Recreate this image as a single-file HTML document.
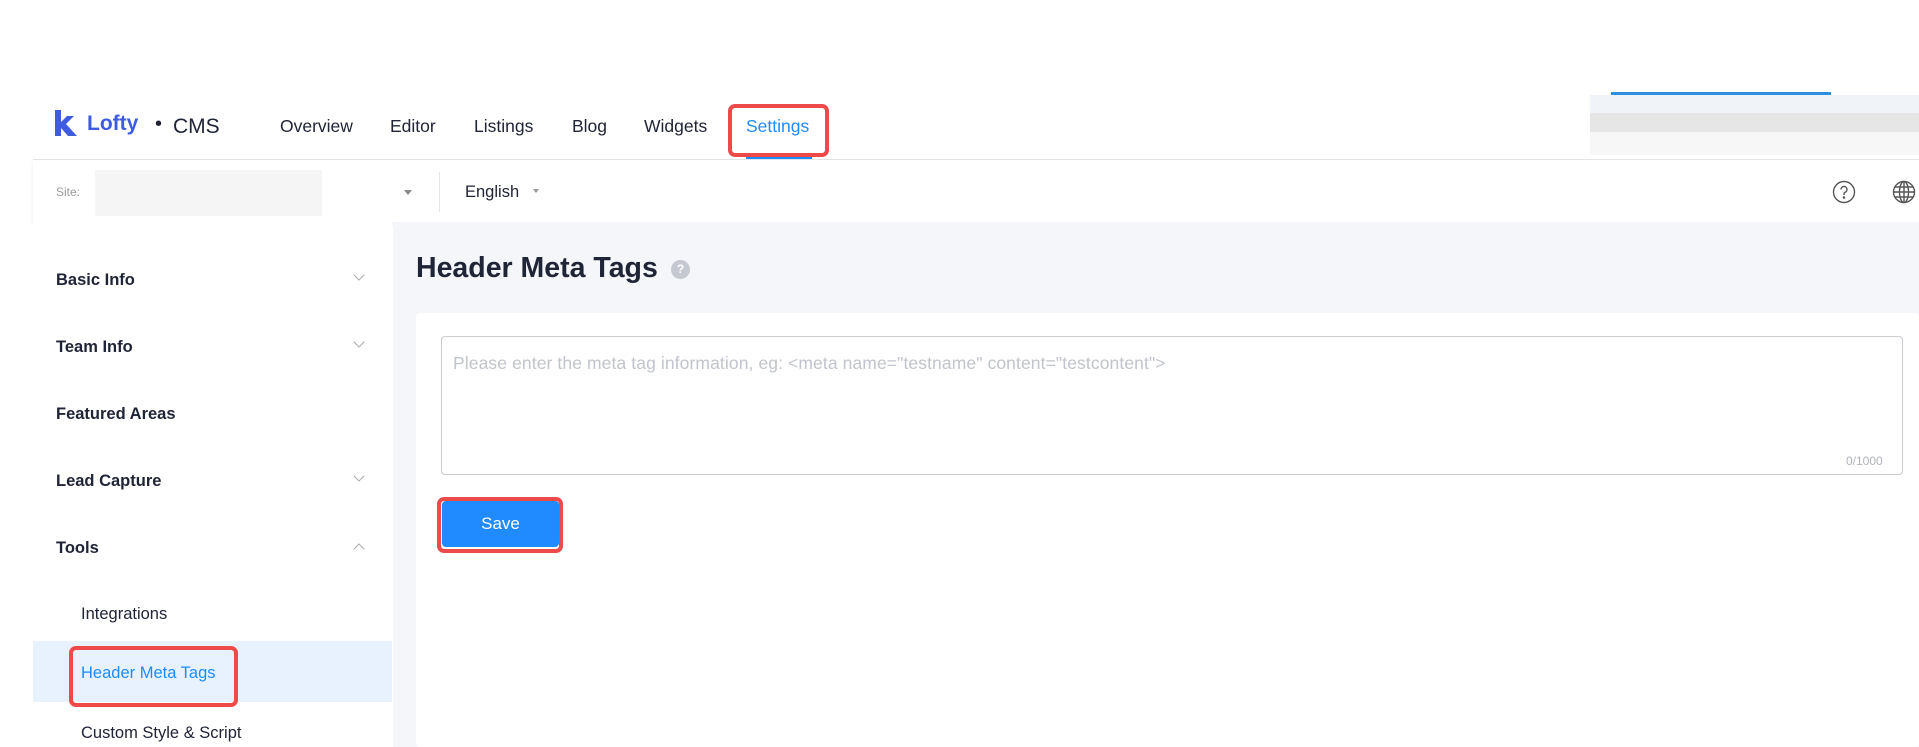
<!DOCTYPE html>
<html><head><meta charset="utf-8"><style>
*{margin:0;padding:0;box-sizing:border-box}
body{width:1919px;height:747px;overflow:hidden;background:#fff;font-family:"Liberation Sans",Arial,sans-serif;position:relative}
.a{position:absolute;white-space:nowrap}
.nav{top:116px;font-size:17.5px;color:#202437}
.side{font-size:16.5px;font-weight:bold;color:#202437;left:56px}
.sub{font-size:16.5px;color:#202437;left:81px}
.chev{left:355px;width:8px;height:8px;border-right:1px solid #aaa;border-bottom:1px solid #aaa;transform:rotate(45deg)}
</style></head><body>
<svg class="a" style="left:55px;top:110px" width="25" height="26" viewBox="0 0 25 26"><path d="M0 0h6v12l6-6h7l-8 8 11 12h-9l-7-8v8H0z" fill="#3f5ce0"/></svg>
<div class="a" style="left:87px;top:112px;font-size:21px;font-weight:bold;color:#3f5ce0">Lofty</div>
<div class="a" style="left:155px;top:113px;font-size:20px;color:#202437">•</div>
<div class="a" style="left:173px;top:115px;font-size:21px;color:#202437">CMS</div>
<div class="a nav" style="left:280px">Overview</div>
<div class="a nav" style="left:390px">Editor</div>
<div class="a nav" style="left:474px">Listings</div>
<div class="a nav" style="left:572px">Blog</div>
<div class="a nav" style="left:644px">Widgets</div>
<div class="a nav" style="left:746px;color:#1f8bff">Settings</div>
<div class="a" style="left:746px;top:157px;width:66px;height:3px;background:#1f8bff"></div>
<div class="a" style="left:728px;top:104px;width:101px;height:53px;border:4px solid #ef4a4a;border-radius:7px"></div>
<div class="a" style="left:1611px;top:92px;width:220px;height:3px;background:#2d8fe0"></div>
<div class="a" style="left:1590px;top:95px;width:329px;height:60px;background:linear-gradient(#f0f3f8 0 30%,#e6e6e6 30% 62%,#f7f7f7 62%)"></div>
<div class="a" style="left:33px;top:159px;width:1886px;height:1px;background:#e4e6ea"></div>
<div class="a" style="left:33px;top:160px;width:1886px;height:62px;background:#fff;box-shadow:0 2px 4px rgba(0,0,0,.08)"></div>
<div class="a" style="left:56px;top:185px;font-size:12px;color:#999">Site:</div>
<div class="a" style="left:95px;top:170px;width:227px;height:46px;background:#f5f5f5"></div>
<div class="a" style="left:404px;top:190px;border:4px solid transparent;border-top:5px solid #888"></div>
<div class="a" style="left:439px;top:172px;width:1px;height:40px;background:#e6e6e6"></div>
<div class="a" style="left:465px;top:183px;font-size:16.5px;color:#202437">English</div>
<div class="a" style="left:533px;top:189px;border:3px solid transparent;border-top:4px solid #999"></div>
<svg class="a" style="left:1832px;top:180px" width="24" height="24" viewBox="0 0 24 24" fill="none" stroke="#555" stroke-width="1.4"><circle cx="12" cy="12" r="10.5"/><path d="M9 9.5a3 3 0 1 1 4 2.8c-.8.4-1 1-1 2v.7"/><circle cx="12" cy="17.5" r=".6" fill="#555"/></svg>
<svg class="a" style="left:1892px;top:180px" width="24" height="24" viewBox="0 0 24 24" fill="none" stroke="#555" stroke-width="1.4"><circle cx="12" cy="12" r="10.5"/><ellipse cx="12" cy="12" rx="4.5" ry="10.5"/><path d="M12 1.5v21M1.5 12h21M3 7h18M3 17h18"/></svg>
<div class="a" style="left:393px;top:222px;width:1526px;height:525px;background:#f5f6fa"></div>
<div class="a" style="left:33px;top:222px;width:359px;height:525px;background:#fff"></div>
<div class="a" style="left:416px;top:252px;font-size:28.5px;font-weight:bold;color:#202437">Header Meta Tags</div>
<div class="a" style="left:671px;top:260px;width:19px;height:19px;border-radius:50%;background:#c6c8cf;color:#fff;font-size:12px;text-align:center;line-height:19px;font-weight:bold">?</div>
<div class="a" style="left:416px;top:313px;width:1503px;height:434px;background:#fff;border-radius:4px"></div>
<div class="a" style="left:441px;top:336px;width:1462px;height:139px;border:1px solid #c9ccd3;border-radius:4px"></div>
<div class="a" style="left:453px;top:353px;font-size:17.5px;letter-spacing:.1px;color:#c0c4cc">Please enter the meta tag information, eg: &lt;meta name="testname" content="testcontent"&gt;</div>
<div class="a" style="left:1846px;top:454px;font-size:12px;color:#b0b3ba">0/1000</div>
<div class="a" style="left:442px;top:501px;width:117px;height:46px;background:#1f8bff;border-radius:4px;color:#fff;font-size:17px;text-align:center;line-height:46px">Save</div>
<div class="a" style="left:437px;top:497px;width:126px;height:56px;border:4px solid #ef4a4a;border-radius:7px"></div>
<div class="a side" style="top:271px">Basic Info</div><div class="a chev" style="top:271px"></div>
<div class="a side" style="top:338px">Team Info</div><div class="a chev" style="top:338px"></div>
<div class="a side" style="top:405px">Featured Areas</div>
<div class="a side" style="top:472px">Lead Capture</div><div class="a chev" style="top:472px"></div>
<div class="a side" style="top:539px">Tools</div><div class="a chev" style="top:545px;transform:rotate(225deg)"></div>
<div class="a sub" style="top:605px">Integrations</div>
<div class="a" style="left:33px;top:641px;width:359px;height:61px;background:#e8f2fe"></div>
<div class="a sub" style="top:664px;color:#1f8bff">Header Meta Tags</div>
<div class="a" style="left:69px;top:646px;width:169px;height:61px;border:4px solid #ef4a4a;border-radius:7px"></div>
<div class="a sub" style="top:724px">Custom Style &amp; Script</div>
</body></html>
